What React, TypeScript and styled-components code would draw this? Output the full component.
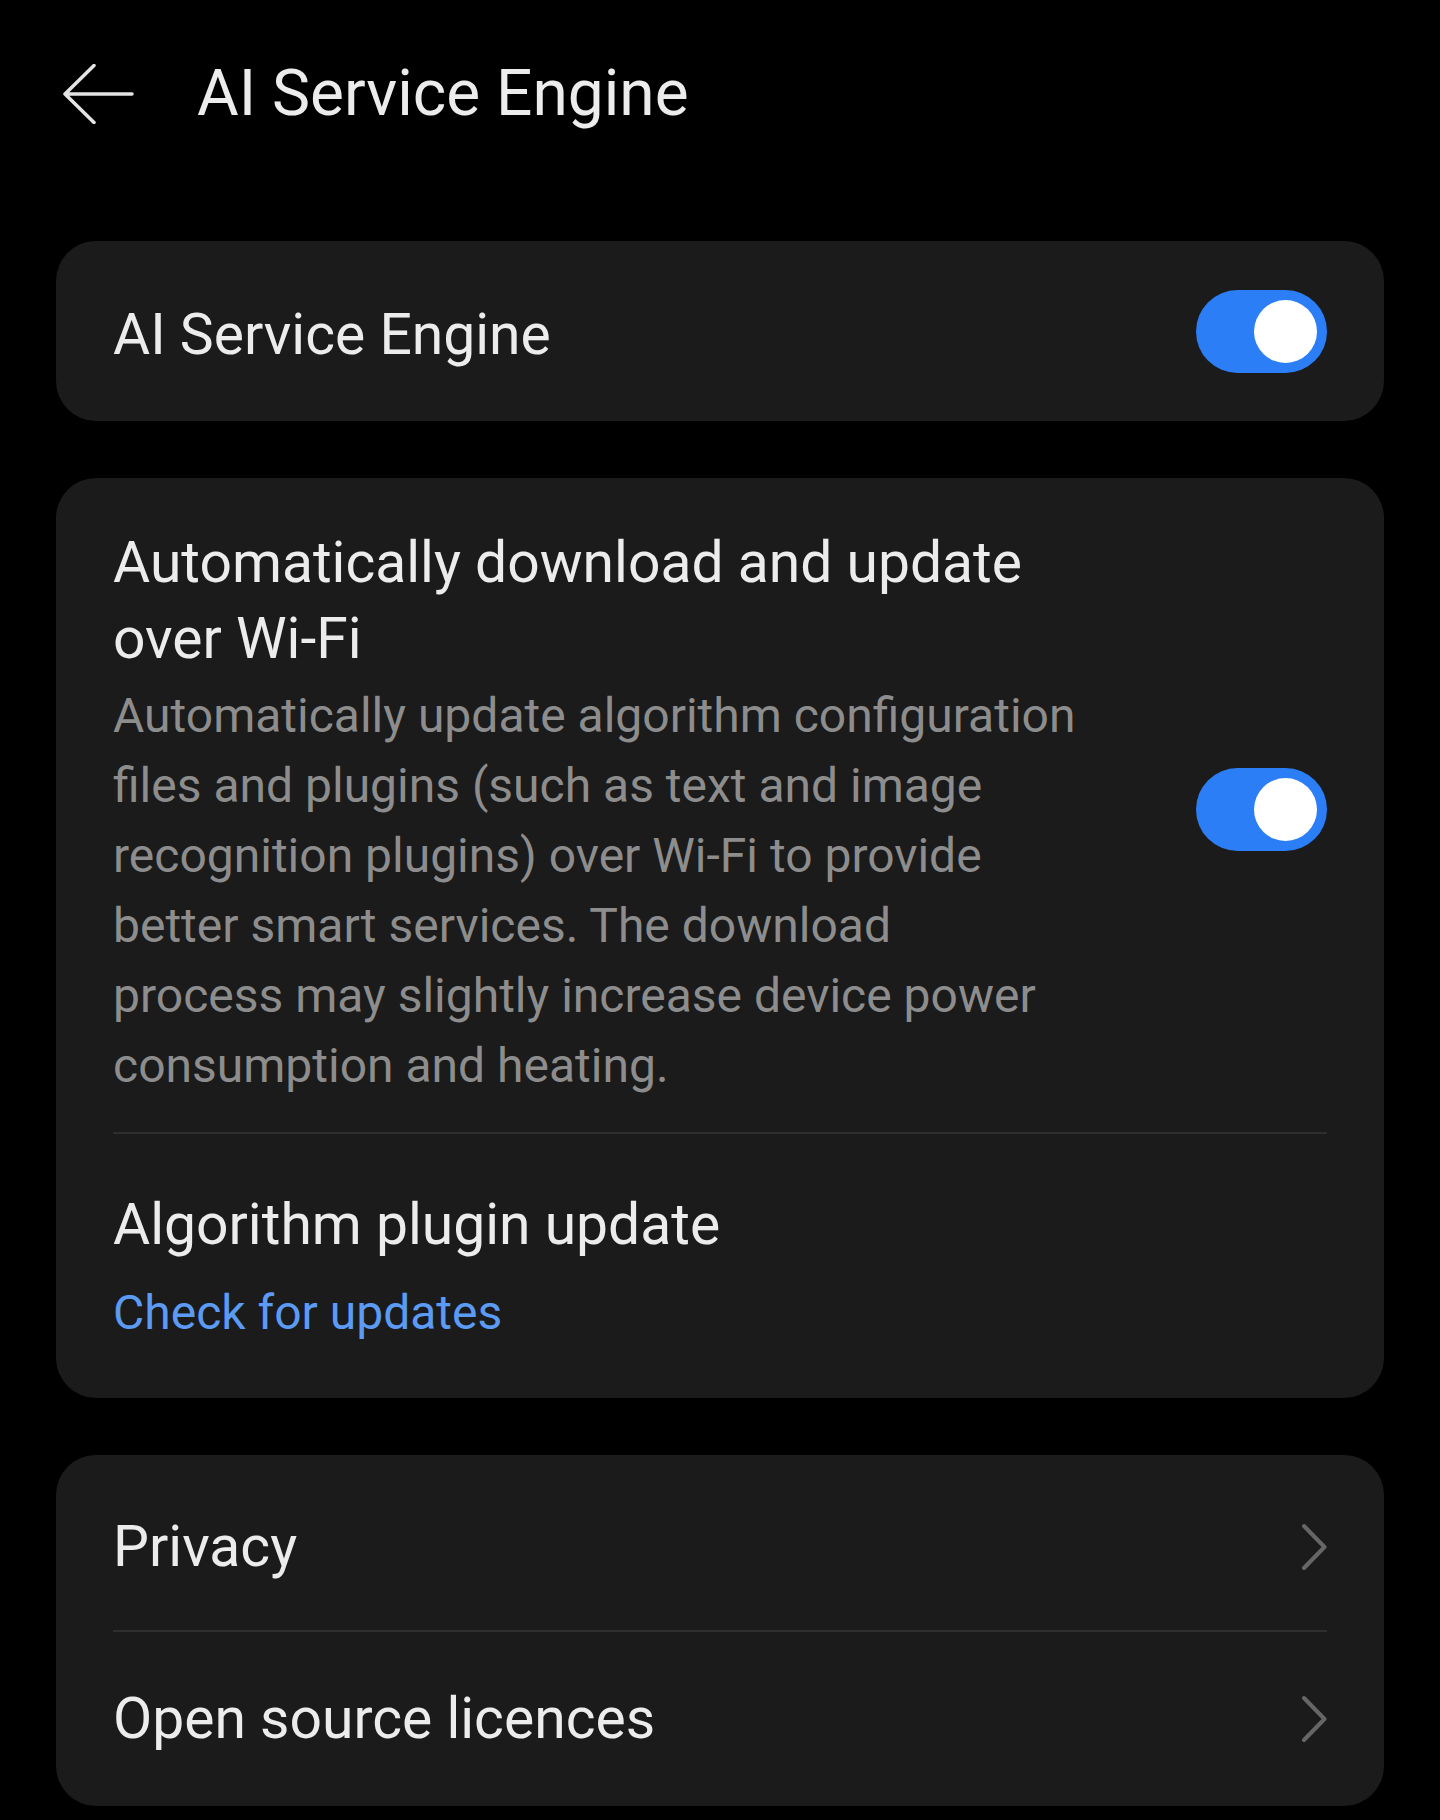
import React from "react";
import styled, { createGlobalStyle } from "styled-components";

const GlobalStyle = createGlobalStyle`
  html, body {
    margin: 0;
    padding: 0;
    background: #000000;
  }
  body {
    font-family: Roboto, "Noto Sans", "Liberation Sans", Arial, sans-serif;
    -webkit-font-smoothing: antialiased;
  }
  * {
    box-sizing: border-box;
  }
`;

const Page = styled.div`
  width: 1440px;
  min-height: 1820px;
  padding: 0 56px;
  background: #000000;
  display: flex;
  flex-direction: column;
`;

const Header = styled.header`
  height: 188px;
  display: flex;
  align-items: center;
  padding-left: 6px;
  gap: 63px;
`;

const BackButton = styled.button`
  width: 72px;
  height: 60px;
  padding: 0;
  border: 0;
  background: none;
  color: #e4e4e4;
  display: flex;
  align-items: center;
  justify-content: center;
  cursor: pointer;
`;

const PageTitle = styled.h1`
  margin: 0;
  font-size: 64px;
  font-weight: 400;
  line-height: 1;
  color: #ececec;
`;

const Cards = styled.main`
  display: flex;
  flex-direction: column;
  gap: 57px;
  margin-top: 53px;
`;

const Card = styled.section`
  background: #1b1b1b;
  border-radius: 40px;
  display: flex;
  flex-direction: column;
`;

const Row = styled.div<{ $height?: number; $padTop?: number; $padBottom?: number }>`
  display: flex;
  align-items: center;
  justify-content: space-between;
  gap: 56px;
  padding: ${(p) => p.$padTop ?? 0}px 57px ${(p) => p.$padBottom ?? 0}px;
  ${(p) => (p.$height ? `height: ${p.$height}px;` : "")}
  cursor: pointer;
`;

const TextBlock = styled.div`
  flex: 1;
  min-width: 0;
  display: flex;
  flex-direction: column;
`;

const ItemTitle = styled.div<{ $maxWidth?: number; $drop?: number }>`
  font-size: 57px;
  font-weight: 400;
  line-height: 76px;
  color: #ececec;
  ${(p) => (p.$maxWidth ? `max-width: ${p.$maxWidth}px;` : "")}
  ${(p) => (p.$drop ? `padding-top: ${p.$drop}px;` : "")}
`;

const Description = styled.div`
  margin-top: 4px;
  font-size: 48px;
  line-height: 70px;
  color: #8d8d8d;
  white-space: nowrap;
`;

const LinkText = styled.div`
  margin-top: 18px;
  font-size: 48px;
  line-height: 64px;
  color: #5b9bf3;
`;

const Divider = styled.hr`
  margin: 0 57px;
  border: 0;
  height: 2px;
  background: #2e2e2e;
`;

const Track = styled.div<{ $on: boolean; $lift?: number }>`
  flex: none;
  width: 131px;
  height: 83px;
  border-radius: 42px;
  padding: 0 10px;
  margin-bottom: ${(p) => p.$lift ?? 0}px;
  background: ${(p) => (p.$on ? "#2b7ef6" : "#4a4a4a")};
  display: flex;
  align-items: center;
  justify-content: ${(p) => (p.$on ? "flex-end" : "flex-start")};
`;

const Thumb = styled.div`
  width: 63px;
  height: 63px;
  border-radius: 50%;
  background: #ffffff;
`;

const Chevron = styled.svg`
  flex: none;
  width: 26px;
  height: 48px;
  color: #666666;
`;

const Toggle: React.FC<{ on: boolean; lift?: number }> = ({ on, lift }) => (
  <Track $on={on} $lift={lift} role="switch" aria-checked={on}>
    <Thumb />
  </Track>
);

const ChevronRight = () => (
  <Chevron viewBox="0 0 26 48" fill="none">
    <path d="M3 3 L23.5 24 L3 45" stroke="currentColor" strokeWidth="4" strokeLinecap="round" strokeLinejoin="round" />
  </Chevron>
);

const descriptionLines = [
  "Automatically update algorithm configuration",
  "files and plugins (such as text and image",
  "recognition plugins) over Wi-Fi to provide",
  "better smart services. The download",
  "process may slightly increase device power",
  "consumption and heating.",
];

export default function App() {
  return (
    <>
      <GlobalStyle />
      <Page>
        <Header>
          <BackButton aria-label="Back">
            <svg width="72" height="60" viewBox="0 0 72 60" fill="none">
              <path
                d="M70 30 H3 M32 1.5 L3 30 L32 58.5"
                stroke="currentColor"
                strokeWidth="3.5"
                strokeLinecap="round"
                strokeLinejoin="round"
              />
            </svg>
          </BackButton>
          <PageTitle>AI Service Engine</PageTitle>
        </Header>
        <Cards>
          <Card>
            <Row $height={180}>
              <ItemTitle $drop={7}>AI Service Engine</ItemTitle>
              <Toggle on />
            </Row>
          </Card>

          <Card>
            <Row $padTop={47} $padBottom={31}>
              <TextBlock>
                <ItemTitle $maxWidth={980}>Automatically download and update over Wi-Fi</ItemTitle>
                <Description>
                  {descriptionLines.map((line, i) => (
                    <React.Fragment key={i}>
                      {line}
                      {i < descriptionLines.length - 1 && <br />}
                    </React.Fragment>
                  ))}
                </Description>
              </TextBlock>
              <Toggle on lift={7} />
            </Row>
            <Divider />
            <Row $padTop={53} $padBottom={53}>
              <TextBlock>
                <ItemTitle>Algorithm plugin update</ItemTitle>
                <LinkText>Check for updates</LinkText>
              </TextBlock>
            </Row>
          </Card>

          <Card>
            <Row $height={175} $padTop={8}>
              <ItemTitle>Privacy</ItemTitle>
              <ChevronRight />
            </Row>
            <Divider />
            <Row $height={174}>
              <ItemTitle>Open source licences</ItemTitle>
              <ChevronRight />
            </Row>
          </Card>
        </Cards>
      </Page>
    </>
  );
}
